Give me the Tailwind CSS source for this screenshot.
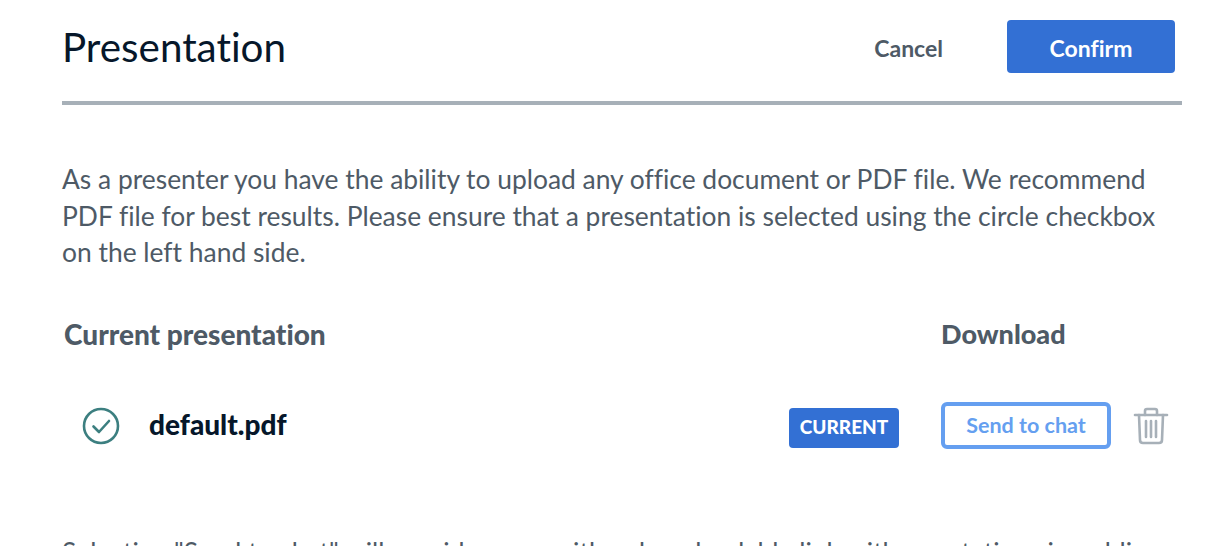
<!DOCTYPE html>
<html lang="en">
<head>
    <meta charset="UTF-8">
    <title>Presentation</title>
    <script src="https://cdn.jsdelivr.net/npm/@tailwindcss/browser@4"></script>
</head>
<body class="bg-white font-['Lato','Noto_Sans',sans-serif] overflow-hidden [font-variant-ligatures:none]">
    <div class="h-[546px] overflow-hidden pl-[62px] pr-[36px] pt-[20px]">
        <!-- header -->
        <header class="flex items-start justify-between h-[85px] border-b-[4px] border-[#a7b0b8]">
            <h1 class="text-[40.4px] leading-[54px] text-[#06172a]">Presentation</h1>
            <div class="flex items-center pr-[7px] h-[53px]">
                <button class="text-[23px] font-bold text-[#4e5a66] mr-[64px] pt-[4px]">Cancel</button>
                <button class="w-[168px] h-[53px] rounded-[4px] bg-[#3370d4] text-white text-[23px] font-bold pt-[4px]">Confirm</button>
            </div>
        </header>

        <p class="mt-[56px] text-[26.4px] leading-[36.5px] text-[#4e5a66]">
            As a presenter you have the ability to upload any office document or PDF file. We recommend<br>
            PDF file for best results. Please ensure that a presentation is selected using the circle checkbox<br>
            on the left hand side.
        </p>

        <!-- table -->
        <div class="mt-[45px] flex leading-[36px] font-black text-[#4e5a66] pl-[2px]">
            <div class="w-[877px] text-[28px]">Current presentation</div>
            <div class="text-[27px]">Download</div>
        </div>

        <div class="mt-[51px] flex items-center h-[46px]">
            <svg class="ml-[20px] w-[38px] h-[38px]" viewBox="0 0 38 38" fill="none" stroke="#3c7f80" stroke-width="2.6">
                <circle cx="19" cy="19" r="17"/>
                <path d="M11.5 19.5l5.5 5.5 10-11" stroke-linecap="round" stroke-linejoin="round"/>
            </svg>
            <div class="ml-[29px] mb-[4px] w-[640px] text-[28px] font-black text-[#06172a]">default.pdf</div>
            <div class="mt-[4px] w-[110px] h-[40px] rounded-[4px] bg-[#3370d4] text-white text-[19px] font-black flex items-center justify-center">CURRENT</div>
            <button class="ml-[42px] w-[170px] h-[47px] rounded-[6px] border-[4px] border-[#659ff0] text-[#659ff0] text-[21.5px] font-bold">Send to chat</button>
            <svg class="ml-[22px] w-[36px] h-[38px]" viewBox="0 0 36 38" fill="none" stroke="#a7b0b8" stroke-width="2.6" stroke-linecap="round" stroke-linejoin="round">
                <path d="M2 8h32"/>
                <path d="M12 8V4q0-2 2-2h8q2 0 2 2v4"/>
                <path d="M6 8l1 25q0 3 3 3h16q3 0 3-3l1-25"/>
                <path d="M13 14v16M18 14v16M23 14v16"/>
            </svg>
        </div>

        <p class="mt-[85px] text-[26.4px] leading-[36.5px] text-[#4e5a66]">Selecting "Send to chat" will provide users with a downloadable link with annotations in public chat.</p>
    </div>
</body>
</html>
